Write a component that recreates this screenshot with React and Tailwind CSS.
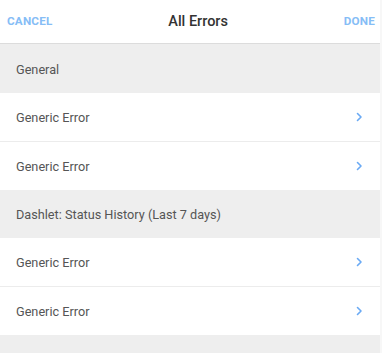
import React from "react";

const sections = [
  { title: "General", h: "h-[49px]", items: ["Generic Error", "Generic Error"] },
  { title: "Dashlet: Status History (Last 7 days)", h: "h-[48px]", items: ["Generic Error", "Generic Error"] },
];

const Chevron = () => (
  <svg width="7" height="10" viewBox="0 0 7 10" fill="none" className="mr-[17px]">
    <path d="M1.5 1.5L5 5L1.5 8.5" stroke="#6aaaf4" strokeWidth="1.6" strokeLinecap="round" strokeLinejoin="round" />
  </svg>
);

const App = () => {
  return (
    <div className="flex w-[382px] h-[353px] overflow-hidden" style={{ fontFamily: "Roboto, 'Liberation Sans', sans-serif" }}>
      <div className="w-[380px] h-full bg-[#eeeeee] flex flex-col">
        {/* Header */}
        <div className="h-[44px] shrink-0 bg-white border-b border-[#dcdcdc] flex items-center px-[7px]">
          <button className="text-[11.7px] font-bold tracking-[0.2px] text-[#86bdf6]">CANCEL</button>
          <span className="flex-1 text-center text-[14.5px] font-medium text-[#333333]">All Errors</span>
          <button className="text-[11.7px] font-bold tracking-[0.2px] text-[#86bdf6] mr-[-2px]">DONE</button>
        </div>

        {sections.map((section, i) => (
          <div key={i}>
            <div className={`${section.h} flex items-center px-4 pt-[2px] text-[12.7px] text-[#555555]`}>{section.title}</div>
            <div className="bg-white">
              {section.items.map((item, j) => (
                <div
                  key={j}
                  className={`flex items-center justify-between pl-4 text-[12.7px] text-[#555555] ${
                    j < section.items.length - 1 ? "border-b border-[#ececec] h-[49px]" : "h-[48px]"
                  }`}
                >
                  <span className="pt-[2px]">{item}</span>
                  <Chevron />
                </div>
              ))}
            </div>
          </div>
        ))}
      </div>
      <div className="w-[2px] h-full bg-[#f7f7f7]" />
    </div>
  );
};

export default App;
